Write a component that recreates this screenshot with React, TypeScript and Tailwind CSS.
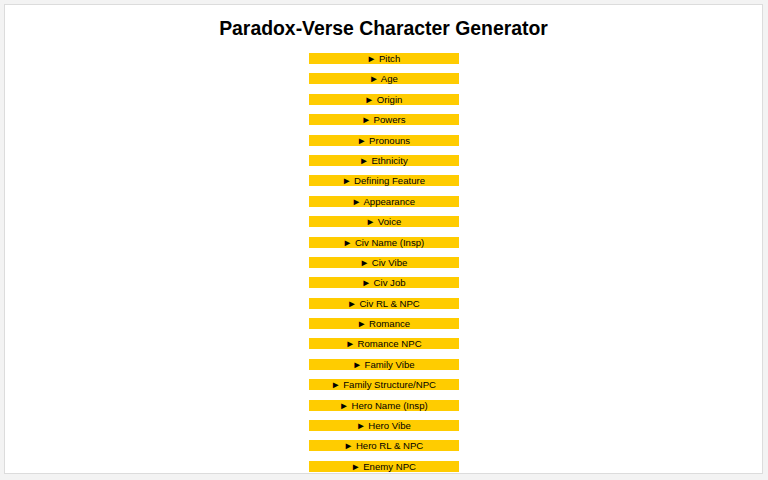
import React from 'react';

const sections = [
  'Pitch',
  'Age',
  'Origin',
  'Powers',
  'Pronouns',
  'Ethnicity',
  'Defining Feature',
  'Appearance',
  'Voice',
  'Civ Name (Insp)',
  'Civ Vibe',
  'Civ Job',
  'Civ RL & NPC',
  'Romance',
  'Romance NPC',
  'Family Vibe',
  'Family Structure/NPC',
  'Hero Name (Insp)',
  'Hero Vibe',
  'Hero RL & NPC',
  'Enemy NPC',
];

export default function App() {
  return (
    <div className="w-[768px] h-[480px] bg-[#f3f3f3] pt-[4px] pl-[4px] overflow-hidden" style={{ fontFamily: '"Liberation Sans", Arial, sans-serif' }}>
      <div className="w-[759px] h-[470px] bg-white border border-[#dcdcdc] overflow-hidden">
        <h1 className="text-center text-[19.4px] font-bold text-black mt-[12px] mb-[13px] leading-[23px]">
          Paradox-Verse Character Generator
        </h1>
        <div className="flex flex-col items-center gap-[9.4px]">
          {sections.map((s) => (
            <div
              key={s}
              className="w-[150px] h-[11px] bg-[#ffcc00] text-black text-[9.6px] leading-[11px] text-center"
            >
              ► {s}
            </div>
          ))}
        </div>
      </div>
    </div>
  );
}
